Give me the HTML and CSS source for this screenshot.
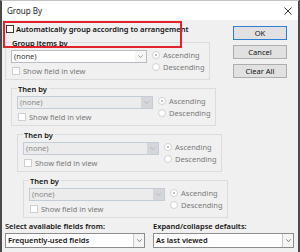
FILE: index.html
```html
<!DOCTYPE html>
<html lang="en">
<head>
  <meta charset="UTF-8" />
  <title>Group By</title>
  <link rel="stylesheet" href="styles.css">
</head>
<body>

  <div class="dialog">
    <div class="titlebar">
      <span class="title">Group By</span>
      <svg class="close" width="8" height="8" viewBox="0 0 8 8">
        <path d="M0.5 0.5 L7.5 7.5 M7.5 0.5 L0.5 7.5" stroke="#222" stroke-width="0.9" fill="none"/>
      </svg>
    </div>

    <div class="content">
      <div class="main">
        <div class="left">
          <label class="auto-row">
            <span class="check dark"></span>
            <span class="auto-text">Automatically group according to arrangement</span>
          </label>

          <div class="group g1">
            <div class="group-title">Group items by</div>
            <div class="group-body">
              <div class="field-col">
                <div class="select"><span>(none)</span><span class="arrow"><svg width="5" height="3" viewBox="0 0 5 3"><path d="M0.3 0.3 L2.5 2.6 L4.7 0.3" stroke="#8a8a8a" stroke-width="0.8" fill="none"/></svg></span></div>
                <label class="show-row"><span class="check"></span>Show field in view</label>
              </div>
              <div class="radio-col">
                <label class="radio-row"><span class="radio on"></span>Ascending</label>
                <label class="radio-row"><span class="radio"></span>Descending</label>
              </div>
            </div>
          </div>

          <div class="group g2">
            <div class="group-title">Then by</div>
            <div class="group-body">
              <div class="field-col">
                <div class="select disabled"><span>(none)</span><span class="arrow"><svg width="5" height="3" viewBox="0 0 5 3"><path d="M0.3 0.3 L2.5 2.6 L4.7 0.3" stroke="#b0b0b0" stroke-width="0.8" fill="none"/></svg></span></div>
                <label class="show-row"><span class="check"></span>Show field in view</label>
              </div>
              <div class="radio-col">
                <label class="radio-row"><span class="radio on"></span>Ascending</label>
                <label class="radio-row"><span class="radio"></span>Descending</label>
              </div>
            </div>
          </div>

          <div class="group g3">
            <div class="group-title">Then by</div>
            <div class="group-body">
              <div class="field-col">
                <div class="select disabled"><span>(none)</span><span class="arrow"><svg width="5" height="3" viewBox="0 0 5 3"><path d="M0.3 0.3 L2.5 2.6 L4.7 0.3" stroke="#b0b0b0" stroke-width="0.8" fill="none"/></svg></span></div>
                <label class="show-row"><span class="check"></span>Show field in view</label>
              </div>
              <div class="radio-col">
                <label class="radio-row"><span class="radio on"></span>Ascending</label>
                <label class="radio-row"><span class="radio"></span>Descending</label>
              </div>
            </div>
          </div>

          <div class="group g4">
            <div class="group-title">Then by</div>
            <div class="group-body">
              <div class="field-col">
                <div class="select disabled"><span>(none)</span><span class="arrow"><svg width="5" height="3" viewBox="0 0 5 3"><path d="M0.3 0.3 L2.5 2.6 L4.7 0.3" stroke="#b0b0b0" stroke-width="0.8" fill="none"/></svg></span></div>
                <label class="show-row"><span class="check"></span>Show field in view</label>
              </div>
              <div class="radio-col">
                <label class="radio-row"><span class="radio on"></span>Ascending</label>
                <label class="radio-row"><span class="radio"></span>Descending</label>
              </div>
            </div>
          </div>
        </div>

        <div class="buttons">
          <button class="btn default">OK</button>
          <button class="btn">Cancel</button>
          <button class="btn">Clear All</button>
        </div>
      </div>

      <div class="bottom">
        <div class="bottom-col">
          <div class="bottom-label">Select available fields from:</div>
          <div class="select big"><span>Frequently-used fields</span><span class="arrow"><svg width="5" height="3" viewBox="0 0 5 3"><path d="M0.3 0.3 L2.5 2.6 L4.7 0.3" stroke="#666" stroke-width="0.8" fill="none"/></svg></span></div>
        </div>
        <div class="bottom-col right">
          <div class="bottom-label">Expand/collapse defaults:</div>
          <div class="select big"><span>As last viewed</span><span class="arrow"><svg width="5" height="3" viewBox="0 0 5 3"><path d="M0.3 0.3 L2.5 2.6 L4.7 0.3" stroke="#666" stroke-width="0.8" fill="none"/></svg></span></div>
        </div>
      </div>
    </div>

    <div class="highlight"></div>
  </div>

</body>
</html>
```

FILE: styles.css
```css
* {
  box-sizing: border-box;
  margin: 0;
  padding: 0;
}

body {
  font-family: 'Noto Sans', 'Open Sans', sans-serif;
  font-size: 7.5px;
  color: #1e1e1e;
  background: #f0f0f0;
}

.dialog {
  position: relative;
  width: 300px;
  height: 252px;
  background: #f0f0f0;
  border-left: 2px solid #4a4a4a;
  border-right: 2px solid #4a4a4a;
  border-top: 1px solid #c4c4c4;
  overflow: hidden;
}

.titlebar {
  height: 19px;
  background: white;
  display: flex;
  align-items: center;
  justify-content: space-between;
  padding: 0 6px 0 5px;
}

.title {
  font-size: 8px;
  color: #222;
}

.close {
  display: block;
  margin-top: 1px;
}

.content {
  padding: 0 4px 0 3px;
}

.main {
  display: flex;
}

.left {
  width: 223px;
}

/* auto group checkbox */
.auto-row {
  display: flex;
  align-items: center;
  height: 10px;
  margin-top: 4px;
  padding-left: 1px;
}

.auto-text {
  font-weight: 600;
  color: #111;
  margin-left: 2px;
}

.check {
  display: inline-block;
  width: 8px;
  height: 8px;
  background: white;
  border: 1px solid #cfcfcf;
  flex-shrink: 0;
}

.check.dark {
  border-color: #3a3a3a;
}

/* group boxes */
.group {
  width: 205px;
  height: 38px;
  border: 1px solid #dcdcdc;
  padding-left: 5px;
  margin-top: 8px;
}

.g2 { margin-left: 6px; }
.g3 { margin-left: 12px; }
.g4 { margin-left: 18px; }

.group-title {
  width: fit-content;
  margin-top: -4px;
  margin-left: 0px;
  padding: 0 2px 0 1px;
  line-height: 9px;
  font-weight: 600;
  color: #111;
  background: #f0f0f0;
}

.group-body {
  display: flex;
  margin-top: 2px;
}

.field-col {
  width: 136px;
}

.select {
  display: flex;
  justify-content: space-between;
  align-items: stretch;
  height: 13px;
  background: white;
  border: 1px solid #b9bcc2;
  color: #333;
  line-height: 11px;
}

.select span:first-child {
  padding-left: 2px;
}

.select .arrow {
  width: 11px;
  display: flex;
  align-items: center;
  justify-content: center;
  background: #f6f6f6;
}

.select.disabled {
  background: #ececec;
  border-color: #c3ccd8;
  color: #8a8a8a;
}

.select.disabled .arrow {
  background: #d4d6da;
}

.show-row {
  display: flex;
  align-items: center;
  height: 9px;
  margin-top: 3px;
  padding-left: 1px;
  color: #777;
}

.show-row .check {
  margin-right: 3px;
}

.radio-col {
  margin-left: 5px;
  margin-top: -1px;
}

.radio-row {
  display: flex;
  align-items: center;
  height: 12px;
  color: #7a7a7a;
}

.radio {
  width: 8px;
  height: 8px;
  border-radius: 50%;
  background: white;
  border: 1px solid #d2d2d2;
  margin-right: 3px;
  position: relative;
}

.radio.on::after {
  content: "";
  position: absolute;
  left: 2px;
  top: 2px;
  width: 2px;
  height: 2px;
  border-radius: 50%;
  background: #a8a8a8;
}

/* buttons */
.buttons {
  display: flex;
  flex-direction: column;
  gap: 5px;
  margin-left: 5px;
  padding-top: 6px;
}

.btn {
  width: 54px;
  height: 14px;
  font-family: inherit;
  font-size: 7.5px;
  color: #111;
  background: #e1e1e1;
  border: 1px solid #adadad;
}

.btn.default {
  border: 1px solid #2c7fd6;
}

/* bottom dropdowns */
.bottom {
  display: flex;
  gap: 8px;
  margin-top: 4px;
}

.bottom-col {
  width: 140px;
}

.bottom-col.right {
  width: 141px;
}

.bottom-label {
  line-height: 9px;
  font-weight: 600;
  color: #111;
  margin-bottom: 2px;
}

.select.big {
  height: 15px;
  line-height: 13px;
  border-color: #8c8c8c;
  color: #111;
  font-weight: 600;
}

.select.big .arrow {
  border-left: 1px solid #c8c8c8;
  background: #f4f4f4;
}

/* red annotation box */
.highlight {
  position: absolute;
  left: 1px;
  top: 20px;
  width: 179px;
  height: 27px;
  border: 2px solid #e2242a;
}
```
